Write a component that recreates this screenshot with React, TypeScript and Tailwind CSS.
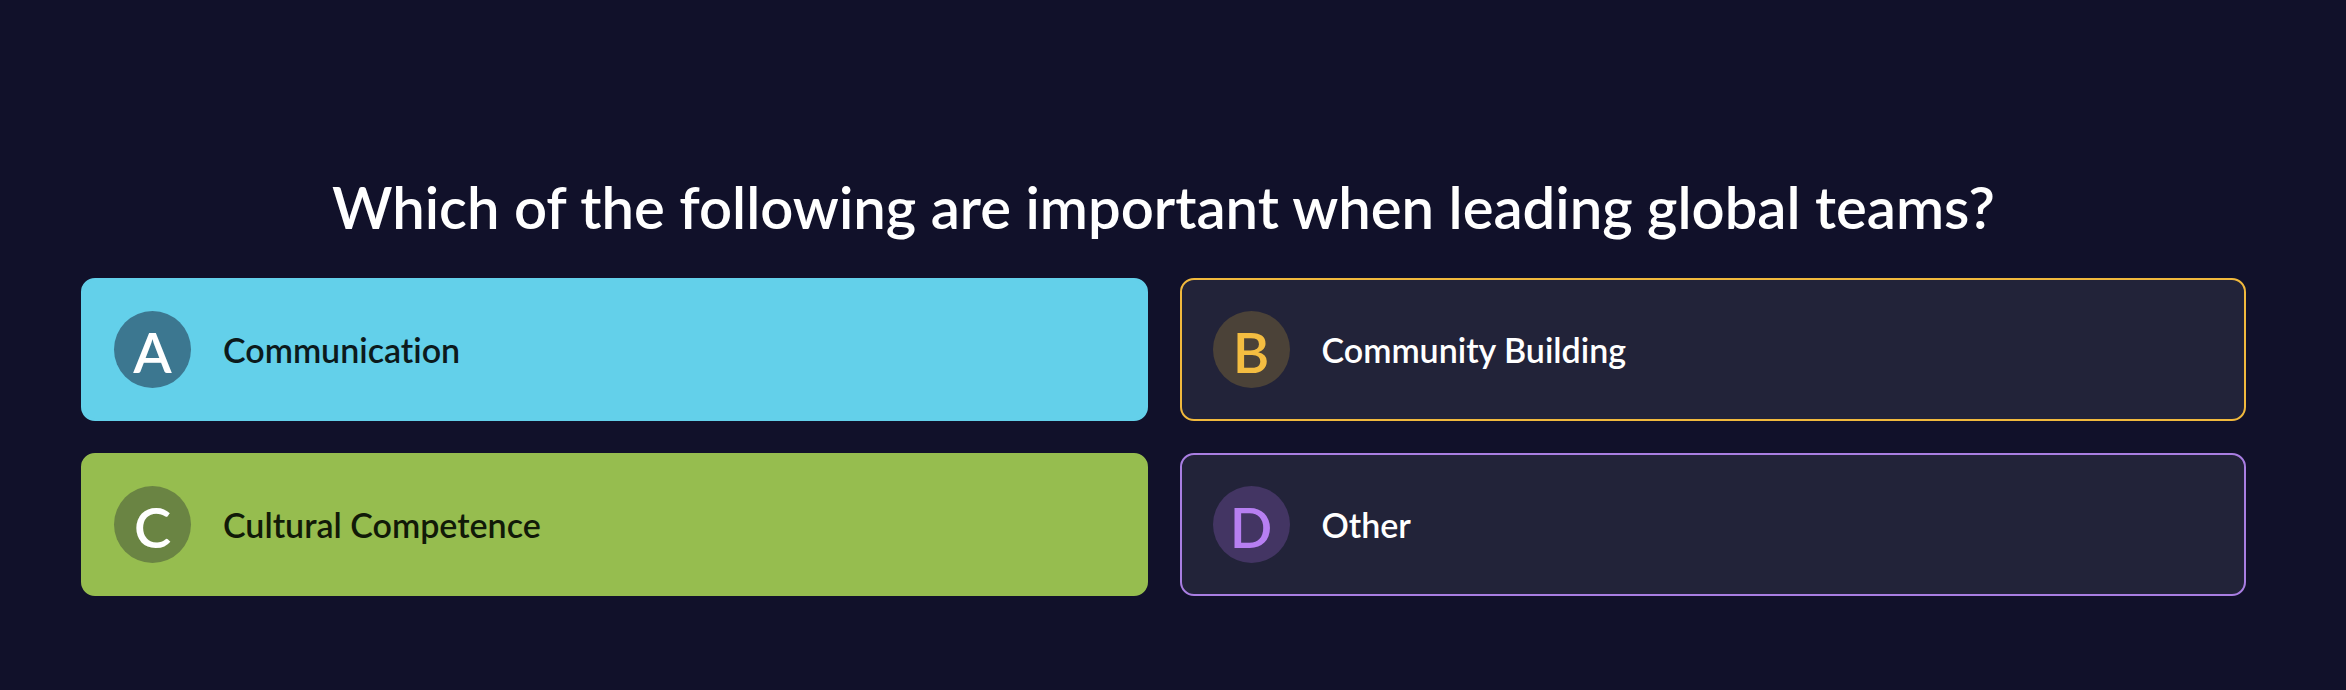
import React from "react";

type Opt = {
  letter: string;
  text: string;
  card: string;
  circle: string;
  letterColor: string;
  textColor: string;
};

const options: Opt[] = [
  {
    letter: "A",
    text: "Communication",
    card: "bg-[#63d0ea] border-2 border-[#63d0ea]",
    circle: "bg-[#3c7790]",
    letterColor: "text-white",
    textColor: "text-[#0c1a1c]",
  },
  {
    letter: "B",
    text: "Community Building",
    card: "bg-[#222339] border-2 border-[#f1b93d]",
    circle: "bg-[#4b4238]",
    letterColor: "text-[#f4bd41]",
    textColor: "text-white",
  },
  {
    letter: "C",
    text: "Cultural Competence",
    card: "bg-[#96bd4f] border-2 border-[#96bd4f]",
    circle: "bg-[#6a8443]",
    letterColor: "text-white",
    textColor: "text-[#111a08]",
  },
  {
    letter: "D",
    text: "Other",
    card: "bg-[#222339] border-2 border-[#a97ee2]",
    circle: "bg-[#433563]",
    letterColor: "text-[#b77ff2]",
    textColor: "text-white",
  },
];

export default function App() {
  return (
    <div
      className="w-[2346px] h-[690px] bg-[#11112a] flex flex-col pl-[81px] pr-[100px] pt-[172px] [font-variant-ligatures:none]"
      style={{ fontFamily: "Lato, 'Noto Sans', sans-serif" }}
    >
      <h1 className="text-center text-white font-semibold text-[58px] leading-[70px]">
        Which of the following are important when leading global teams?
      </h1>
      <div className="grid grid-cols-2 gap-x-[32px] gap-y-[32px] mt-[36px]">
        {options.map((o) => (
          <div
            key={o.letter}
            className={`h-[143px] rounded-[14px] flex items-center pl-[31px] ${o.card}`}
          >
            <div
              className={`w-[77px] h-[77px] rounded-full flex items-center justify-center shrink-0 ${o.circle}`}
            >
              <span className={`text-[56px] leading-none font-semibold pt-[4px] ${o.letterColor}`}>
                {o.letter}
              </span>
            </div>
            <span className={`ml-[32px] text-[34px] font-semibold ${o.textColor}`}>
              {o.text}
            </span>
          </div>
        ))}
      </div>
    </div>
  );
}
